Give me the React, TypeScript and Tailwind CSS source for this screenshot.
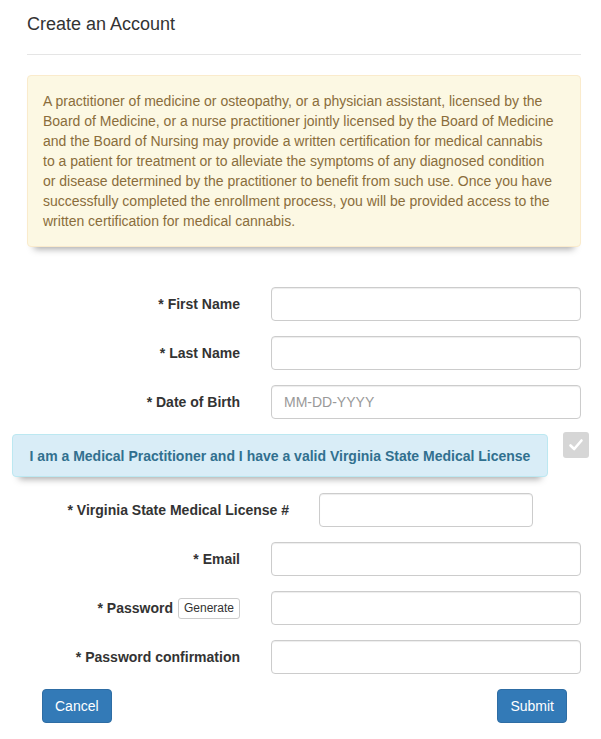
import React from "react";

const lines = [
  "A practitioner of medicine or osteopathy, or a physician assistant, licensed by the",
  "Board of Medicine, or a nurse practitioner jointly licensed by the Board of Medicine",
  "and the Board of Nursing may provide a written certification for medical cannabis",
  "to a patient for treatment or to alleviate the symptoms of any diagnosed condition",
  "or disease determined by the practitioner to benefit from such use. Once you have",
  "successfully completed the enrollment process, you will be provided access to the",
  "written certification for medical cannabis.",
];

function Input({ placeholder, className }: { placeholder?: string; className?: string }) {
  return (
    <input
      placeholder={placeholder}
      className={
        "h-[34px] min-w-0 rounded-[4px] border border-[#ccc] bg-white px-3 text-[14px] text-[#555] placeholder:text-[#999] shadow-[inset_0_1px_1px_rgba(0,0,0,0.075)] outline-none " +
        (className ?? "flex-1")
      }
    />
  );
}

function Row({ label, placeholder }: { label: string; placeholder?: string }) {
  return (
    <div className="flex items-center">
      <label className="w-[213px] shrink-0 text-right text-[14px] font-bold text-[#333]">{label}</label>
      <div className="ml-[31px] flex flex-1">
        <Input placeholder={placeholder} />
      </div>
    </div>
  );
}

export default function App() {
  return (
    <div
      className="min-h-[739px] overflow-hidden bg-white pl-[27px] pr-[20px] pt-[12px] text-[14px] leading-[20px] text-[#333]"
      style={{ fontFamily: '"Liberation Sans", Arial, Helvetica, sans-serif' }}
    >
      <h1 className="text-[18px] leading-[24px] font-normal text-[#333]">Create an Account</h1>
      <div className="mt-[18px] border-t border-[#e5e5e5]" />

      <div className="mt-[20px] rounded-[4px] border border-[#faebcc] bg-[#fcf8e3] px-[15px] py-[15px] text-[#8a6d3b] shadow-[0_9px_7px_-7px_rgba(0,0,0,0.35)]">
        {lines.map((l, i) => (
          <span key={i} className="block whitespace-nowrap">
            {l}
          </span>
        ))}
      </div>

      <div className="mt-[40px] flex flex-col gap-[15px]">
        <Row label="* First Name" />
        <Row label="* Last Name" />
        <Row label="* Date of Birth" placeholder="MM-DD-YYYY" />

        <div className="-ml-[15px] flex items-start">
          <div className="flex h-[43px] w-[536px] shrink-0 items-center justify-center rounded-[4px] border border-[#bce8f1] bg-[#d9edf7] text-[14px] font-bold text-[#31708f] shadow-[0_9px_7px_-7px_rgba(0,0,0,0.35)]">
            I am a Medical Practitioner and I have a valid Virginia State Medical License
          </div>
          <div className="-mt-[2px] ml-[15px] flex h-[26px] w-[26px] shrink-0 items-center justify-center rounded-[3px] bg-[#d6d6d6]">
            <svg width="18" height="18" viewBox="0 0 18 18" fill="none">
              <path d="M3.5 9.5 L7.2 13 L14.5 4.5" stroke="white" strokeWidth="2.6" strokeLinecap="round" strokeLinejoin="round" />
            </svg>
          </div>
        </div>

        <div className="mt-[1px] flex items-center">
          <label className="w-[262px] shrink-0 text-right text-[14px] font-bold text-[#333]">
            * Virginia State Medical License #
          </label>
          <div className="ml-[30px] flex">
            <Input className="w-[214px]" />
          </div>
        </div>

        <Row label="* Email" />

        <div className="flex items-center">
          <div className="flex w-[213px] shrink-0 items-center justify-end gap-[5px]">
            <label className="text-[14px] font-bold text-[#333]">* Password</label>
            <button className="h-[21px] rounded-[3px] border border-[#ccc] bg-white px-[5px] text-[12px] leading-[19px] text-[#333]">
              Generate
            </button>
          </div>
          <div className="ml-[31px] flex flex-1">
            <Input />
          </div>
        </div>

        <Row label="* Password confirmation" />

        <div className="flex items-center justify-between pl-[15px] pr-[14px]">
          <button className="h-[34px] rounded-[4px] border border-[#2e6da4] bg-[#337ab7] px-[12px] text-[14px] text-white">
            Cancel
          </button>
          <button className="h-[34px] rounded-[4px] border border-[#2e6da4] bg-[#337ab7] px-[12px] text-[14px] text-white">
            Submit
          </button>
        </div>
      </div>
    </div>
  );
}
